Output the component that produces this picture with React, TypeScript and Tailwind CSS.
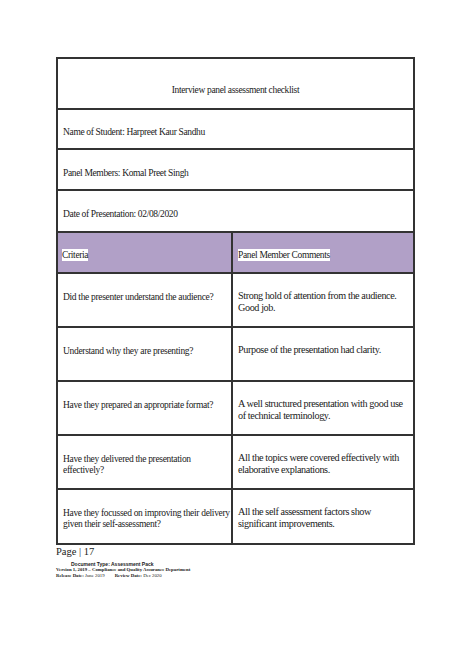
const rows = [
  {
    q: "Did the presenter understand the audience?",
    a: "Strong hold of attention from the audience. Good job.",
  },
  {
    q: "Understand why they are presenting?",
    a: "Purpose of the presentation had clarity.",
  },
  {
    q: "Have they prepared an appropriate format?",
    a: "A well structured presentation with good use of technical terminology.",
  },
  {
    q: "Have they delivered the presentation effectively?",
    a: "All the topics were covered effectively with elaborative explanations.",
  },
  {
    q: "Have they focussed on improving their delivery given their self-assessment?",
    a: "All the self assessment factors show significant improvements.",
  },
];

export default function App() {
  return (
    <div className="w-[474px] h-[670px] bg-white text-[#1a1a1a] font-['Liberation_Serif',serif] overflow-hidden">
      <div className="pt-[57px] pl-[56px]">
        {/* Checklist table */}
        <div className="w-[359px] border-2 border-[#333]">
          <div className="h-[51px] flex items-center justify-center pt-[14px] border-b-2 border-[#333] text-[9.5px] tracking-[-0.35px]">
            Interview panel assessment checklist
          </div>
          <div className="h-[40px] flex items-center pl-[5px] pt-[7px] border-b-2 border-[#333] text-[9.5px] tracking-[-0.35px]">
            Name of Student: Harpreet Kaur Sandhu
          </div>
          <div className="h-[41px] flex items-center pl-[5px] pt-[7px] border-b-2 border-[#333] text-[9.5px] tracking-[-0.35px]">
            Panel Members: Komal Preet Singh
          </div>
          <div className="h-[42px] flex items-center pl-[5px] pt-[7px] border-b-2 border-[#333] text-[9.5px] tracking-[-0.35px]">
            Date of Presentation: 02/08/2020
          </div>
          <div className="h-[41px] flex bg-[#b1a0c7] border-b-2 border-[#333] text-[9.5px] tracking-[-0.35px]">
            <div className="w-[175px] flex items-center pl-[4px] pt-[4px] border-r-2 border-[#333]">
              <span className="bg-white leading-[12px]">Criteria</span>
            </div>
            <div className="flex-1 flex items-center pl-[5px] pt-[4px]">
              <span className="bg-white leading-[12px]">Panel Member Comments</span>
            </div>
          </div>
          {rows.map((r, i) => (
            <div
              key={i}
              className={`flex ${i < rows.length - 1 ? "h-[54px] border-b-2 border-[#333]" : "h-[53px]"}`}
            >
              <div className="w-[175px] shrink-0 pl-[5px] pt-[18px] border-r-2 border-[#333] text-[9.5px] leading-[11px] tracking-[-0.32px]">
                {r.q}
              </div>
              <div className="flex-1 pl-[5px] pr-[6px] pt-[16px] text-[10.2px] leading-[11.5px] tracking-[-0.4px]">
                {r.a}
              </div>
            </div>
          ))}
        </div>

        {/* Footer */}
        <div className="mt-[1px] text-[10.5px] leading-[12px] text-[#222]">Page | 17</div>
        <div className="mt-[3px] pl-[15px] font-['Liberation_Sans',sans-serif] font-bold text-[5px] leading-[6px]">
          Document Type: Assessment Pack
        </div>
        <div className="font-bold text-[4.8px] leading-[6px]">
          Version 1, 2019 – Compliance and Quality Assurance Department
        </div>
        <div className="text-[4.8px] leading-[6px]">
          <span className="font-bold">Release Date:</span> June 2019
          <span className="font-bold ml-[10px]">Review Date:</span> Dec 2020
        </div>
      </div>
    </div>
  );
}
